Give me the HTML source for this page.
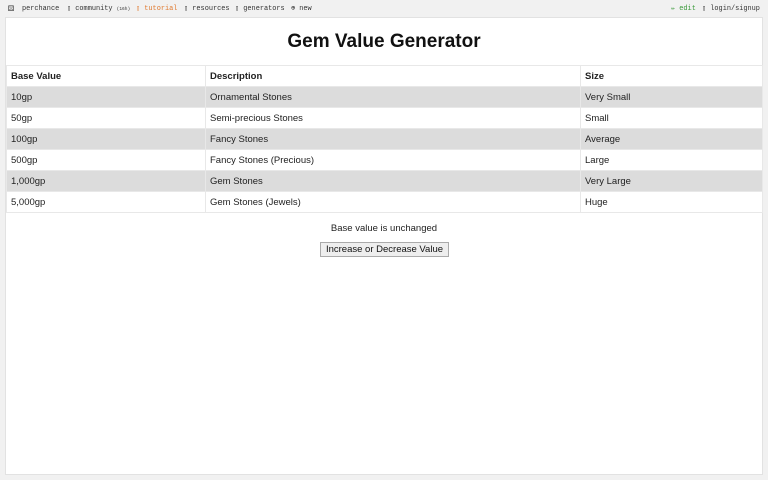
<!DOCTYPE html>
<html><head><style>
body{margin:0;width:768px;height:480px;background:#f1f1f1;font-family:"Liberation Sans",sans-serif;position:relative;overflow:hidden}
.bar{position:absolute;top:1px;left:0;right:0;height:16px;font-family:"Liberation Mono",monospace;font-size:6.9px;color:#333;line-height:17px}
.bar span{position:absolute;top:0;white-space:nowrap}
.panel{position:absolute;left:5px;top:17px;width:758px;height:458px;background:#fff;border:1px solid #e2e2e2;box-sizing:border-box}
h1{margin:0;position:absolute;top:13px;left:0;right:0;text-align:center;font-size:19px;font-weight:bold;color:#111}
table{position:absolute;left:0;top:47px;width:757px;border-collapse:collapse;font-size:9.5px;color:#222}
td,th{height:21px;padding:0 0 0 4px;text-align:left;border:1px solid #e8e8e8;box-sizing:border-box}
th{font-weight:bold;background:#fff}
tr.g td{background:#dcdcdc}
.msg{position:absolute;top:205px;left:0;right:0;text-align:center;font-size:9.5px;color:#222}
button{position:absolute;left:314px;top:224px;width:129px;height:15px;font:9.5px "Liberation Sans",sans-serif;background:#eee;border:1px solid #aaa;padding:0;color:#111}
</style></head><body>
<div class="bar">
<span style="left:8px;font-size:10px">⚄</span>
<span style="left:22px">perchance</span>
<span style="left:67px">▯ community <small style="font-size:4.5px">(16h)</small></span>
<span style="left:136px;color:#e07a30">▯ tutorial</span>
<span style="left:184px">▯ resources</span>
<span style="left:235px">▯ generators</span>
<span style="left:291px">⊕ new</span>
<span style="left:671px;color:#3a9a3a">✏ edit</span>
<span style="left:702px">▯ login/signup</span>
</div>
<div class="panel">
<h1>Gem Value Generator</h1>
<table>
<tr><th style="width:199px">Base Value</th><th style="width:375px">Description</th><th>Size</th></tr>
<tr class="g"><td>10gp</td><td>Ornamental Stones</td><td>Very Small</td></tr>
<tr><td>50gp</td><td>Semi-precious Stones</td><td>Small</td></tr>
<tr class="g"><td>100gp</td><td>Fancy Stones</td><td>Average</td></tr>
<tr><td>500gp</td><td>Fancy Stones (Precious)</td><td>Large</td></tr>
<tr class="g"><td>1,000gp</td><td>Gem Stones</td><td>Very Large</td></tr>
<tr><td>5,000gp</td><td>Gem Stones (Jewels)</td><td>Huge</td></tr>
</table>
<div class="msg">Base value is unchanged</div>
<button>Increase or Decrease Value</button>
</div>
</body></html>
